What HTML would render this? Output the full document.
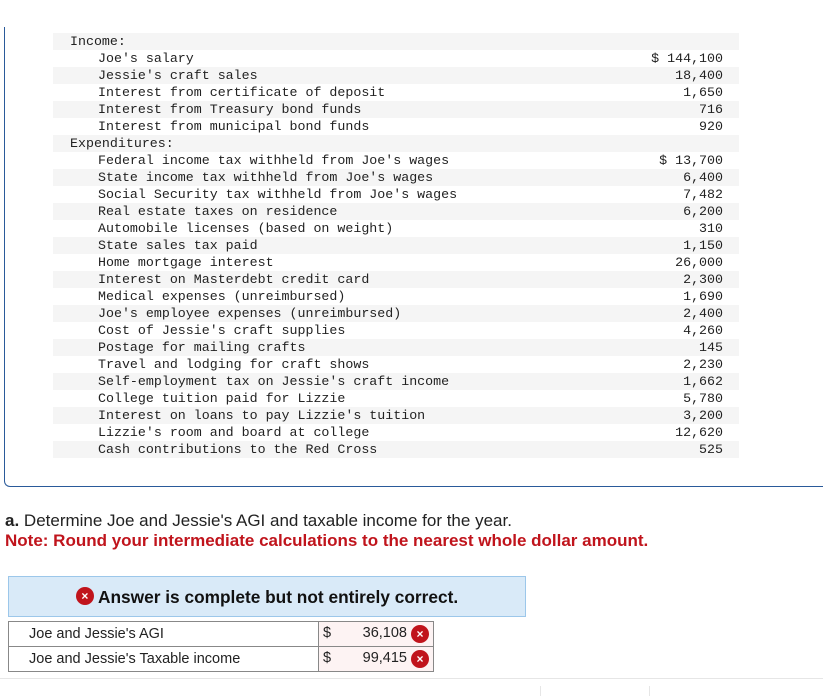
<!DOCTYPE html>
<html><head><style>
body{margin:0;width:823px;height:696px;background:#fff;position:relative;overflow:hidden;font-family:"Liberation Sans",Arial,sans-serif}
.box{position:absolute;left:4px;top:27px;width:830px;height:459px;border-left:1.5px solid #2a5a9a;border-bottom:1.5px solid #2a5a9a;border-bottom-left-radius:6px}
.rows{position:absolute;left:53px;top:33px;width:686px}
.r{height:17px;line-height:17px;font-family:"Liberation Mono",monospace;font-size:13.3px;color:#222;position:relative;white-space:pre}
.r:nth-child(odd){background:#f5f5f5}
.r span{position:absolute;right:16px;top:0}
.h{padding-left:17px}.i{padding-left:45px}
.q{position:absolute;left:5px;top:511px;font-size:17px;color:#222}
.n{position:absolute;left:5px;top:531px;font-size:17px;color:#c0141c;font-weight:bold}
.ans{position:absolute;left:8px;top:576px;width:516px;height:39px;background:#d9eaf8;border:1px solid #9cc7ea;text-align:center;line-height:41px;font-weight:bold;font-size:17.3px;color:#111}
.x{display:inline-block;width:18px;height:18px;border-radius:50%;background:#c0141c;color:#fff;font-size:12px;line-height:18px;text-align:center;font-weight:bold;vertical-align:middle;position:relative;top:-2px}
table{position:absolute;left:8px;top:621px;border-collapse:collapse;font-size:14.5px;color:#222}
td{border:1px solid #888;height:24px;padding:0}
td.l{width:288px;padding-left:20px;padding-right:1px}
td.v{width:114px;background:#fdf3f3;position:relative}
.d{position:absolute;left:4px;top:3px}.a{position:absolute;right:26px;top:3px}.v .x{position:absolute;right:4px;top:3px}
</style></head><body>
<div class="box"></div>
<div class="rows">
<div class="r h">Income:</div>
<div class="r i">Joe's salary<span>$ 144,100</span></div>
<div class="r i">Jessie's craft sales<span>18,400</span></div>
<div class="r i">Interest from certificate of deposit<span>1,650</span></div>
<div class="r i">Interest from Treasury bond funds<span>716</span></div>
<div class="r i">Interest from municipal bond funds<span>920</span></div>
<div class="r h">Expenditures:</div>
<div class="r i">Federal income tax withheld from Joe's wages<span>$ 13,700</span></div>
<div class="r i">State income tax withheld from Joe's wages<span>6,400</span></div>
<div class="r i">Social Security tax withheld from Joe's wages<span>7,482</span></div>
<div class="r i">Real estate taxes on residence<span>6,200</span></div>
<div class="r i">Automobile licenses (based on weight)<span>310</span></div>
<div class="r i">State sales tax paid<span>1,150</span></div>
<div class="r i">Home mortgage interest<span>26,000</span></div>
<div class="r i">Interest on Masterdebt credit card<span>2,300</span></div>
<div class="r i">Medical expenses (unreimbursed)<span>1,690</span></div>
<div class="r i">Joe's employee expenses (unreimbursed)<span>2,400</span></div>
<div class="r i">Cost of Jessie's craft supplies<span>4,260</span></div>
<div class="r i">Postage for mailing crafts<span>145</span></div>
<div class="r i">Travel and lodging for craft shows<span>2,230</span></div>
<div class="r i">Self-employment tax on Jessie's craft income<span>1,662</span></div>
<div class="r i">College tuition paid for Lizzie<span>5,780</span></div>
<div class="r i">Interest on loans to pay Lizzie's tuition<span>3,200</span></div>
<div class="r i">Lizzie's room and board at college<span>12,620</span></div>
<div class="r i">Cash contributions to the Red Cross<span>525</span></div>
</div>
<div class="q"><b>a.</b> Determine Joe and Jessie's AGI and taxable income for the year.</div>
<div class="n">Note: Round your intermediate calculations to the nearest whole dollar amount.</div>
<div class="ans"><span class="x">×</span> Answer is complete but not entirely correct.</div>
<table>
<tr><td class="l">Joe and Jessie's AGI</td><td class="v"><span class="d">$</span><span class="a">36,108</span><span class="x">×</span></td></tr>
<tr><td class="l">Joe and Jessie's Taxable income</td><td class="v"><span class="d">$</span><span class="a">99,415</span><span class="x">×</span></td></tr>
</table>
<div style="position:absolute;left:0;top:678px;width:823px;border-top:1px solid #e6e6e6"></div>
<div style="position:absolute;left:540px;top:686px;height:10px;border-left:1px solid #e6e6e6"></div>
<div style="position:absolute;left:649px;top:686px;height:10px;border-left:1px solid #e6e6e6"></div>
</body></html>
